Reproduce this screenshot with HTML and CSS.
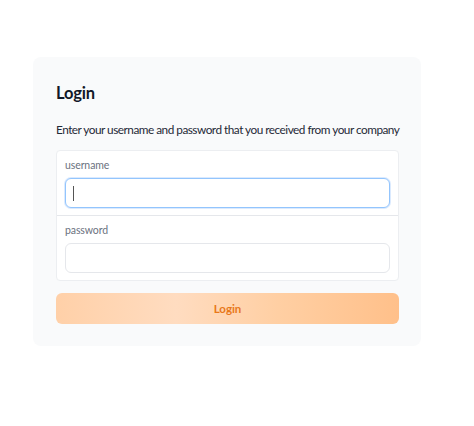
FILE: index.html
```html
<!DOCTYPE html>
<html>
<head>
<meta charset="utf-8">
<link rel="stylesheet" href="styles.css">
</head>
<body>
<div class="page">
  <div class="card">
    <h1 class="title">Login</h1>
    <p class="desc">Enter your username and password that you received from your company</p>
    <div class="form">
      <div class="field">
        <label class="label">username</label>
        <div class="input focused"><span class="caret"></span></div>
      </div>
      <div class="field">
        <label class="label">password</label>
        <div class="input"></div>
      </div>
    </div>
    <button class="btn">Login</button>
  </div>
</div>
</body>
</html>
```
FILE: styles.css
```css
* { box-sizing: border-box; }
html, body { margin: 0; padding: 0; background: #ffffff; }
body { font-family: "Lato", "Noto Sans", sans-serif; color: #1f2937; }
.page { padding: 57px 53px 0 33px; }
.card {
  width: 388px;
  height: 289px;
  background: #f9fafb;
  border-radius: 8px;
  padding: 22px 22px 0 23px;
}
.title { margin: 0; font-size: 16.5px; font-weight: 700; line-height: 28px; color: #111827; letter-spacing: -0.2px; }
.desc { margin: 13px 0 10px; font-size: 11.8px; line-height: 20px; color: #1f2937; white-space: nowrap; letter-spacing: -0.5px; }
.form {
  background: #fff;
  border: 1px solid #eceef1;
  border-radius: 4px;
  overflow: hidden;
}
.field { padding: 6px 8px 7px; }
.field + .field { border-top: 1px solid #e5e7eb; }
.label { display: block; font-size: 10.5px; line-height: 16px; color: #6b7280; margin-bottom: 5px; letter-spacing: -0.1px; }
.input {
  height: 30px;
  border: 1px solid #e5e7eb;
  border-radius: 6px;
  background: #fff;
  position: relative;
}
.input.focused { border-color: #93c5fd; box-shadow: 0 0 0 1px #dbeafe; }
.caret { position: absolute; left: 7px; top: 7px; width: 1px; height: 15px; background: #555; }
.btn {
  display: block;
  width: 343px;
  height: 31px;
  margin-top: 12px;
  border: none;
  border-radius: 6px;
  background: linear-gradient(to right, #ffd0a8 0%, #ffdcc0 35%, #ffcfa3 65%, #ffc08a 100%);
  color: #e8781a;
  font-family: "Lato", "Noto Sans", sans-serif;
  font-size: 11.5px;
  font-weight: 700;
}
```
